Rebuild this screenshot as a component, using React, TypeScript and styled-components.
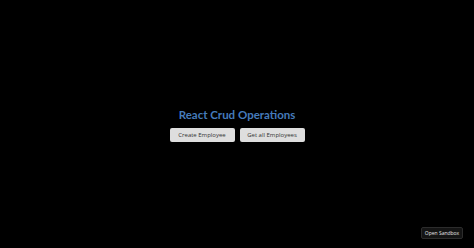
import React from 'react';
import styled, { createGlobalStyle } from 'styled-components';

const GlobalStyle = createGlobalStyle`
  html, body {
    margin: 0;
    padding: 0;
    background: #000000;
  }
  #root {
    height: 100vh;
  }
`;

const Page = styled.div`
  height: 100vh;
  display: flex;
  flex-direction: column;
  align-items: center;
  justify-content: center;
  padding-top: 2px;
  box-sizing: border-box;
`;

const Title = styled.h1`
  margin: 0 0 7px 0;
  font-family: Lato, 'Open Sans', sans-serif;
  font-weight: 700;
  font-size: 11.5px;
  color: #457bbb;
`;

const Row = styled.div`
  display: flex;
  gap: 5px;
`;

const Button = styled.button<{ width: number }>`
  width: ${(props) => props.width}px;
  height: 14px;
  padding: 0;
  border: none;
  border-radius: 2px;
  background: #dedede;
  color: #333333;
  font-family: 'Open Sans', 'Liberation Sans', sans-serif;
  font-size: 6px;
  cursor: pointer;
`;

const SandboxButton = styled.button`
  position: fixed;
  right: 11px;
  bottom: 9px;
  width: 42px;
  height: 12px;
  padding: 0;
  border: 1px solid #2c2c2c;
  border-radius: 2px;
  background: #141414;
  color: #e6e6e6;
  font-family: 'Open Sans', 'Liberation Sans', sans-serif;
  font-size: 5px;
`;

const App: React.FC = () => {
  return (
    <>
      <GlobalStyle />
      <Page>
        <Title>React Crud Operations</Title>
        <Row>
          <Button width={65}>Create Employee</Button>
          <Button width={65}>Get all Employees</Button>
        </Row>
      </Page>
      <SandboxButton>Open Sandbox</SandboxButton>
    </>
  );
};

export default App;
